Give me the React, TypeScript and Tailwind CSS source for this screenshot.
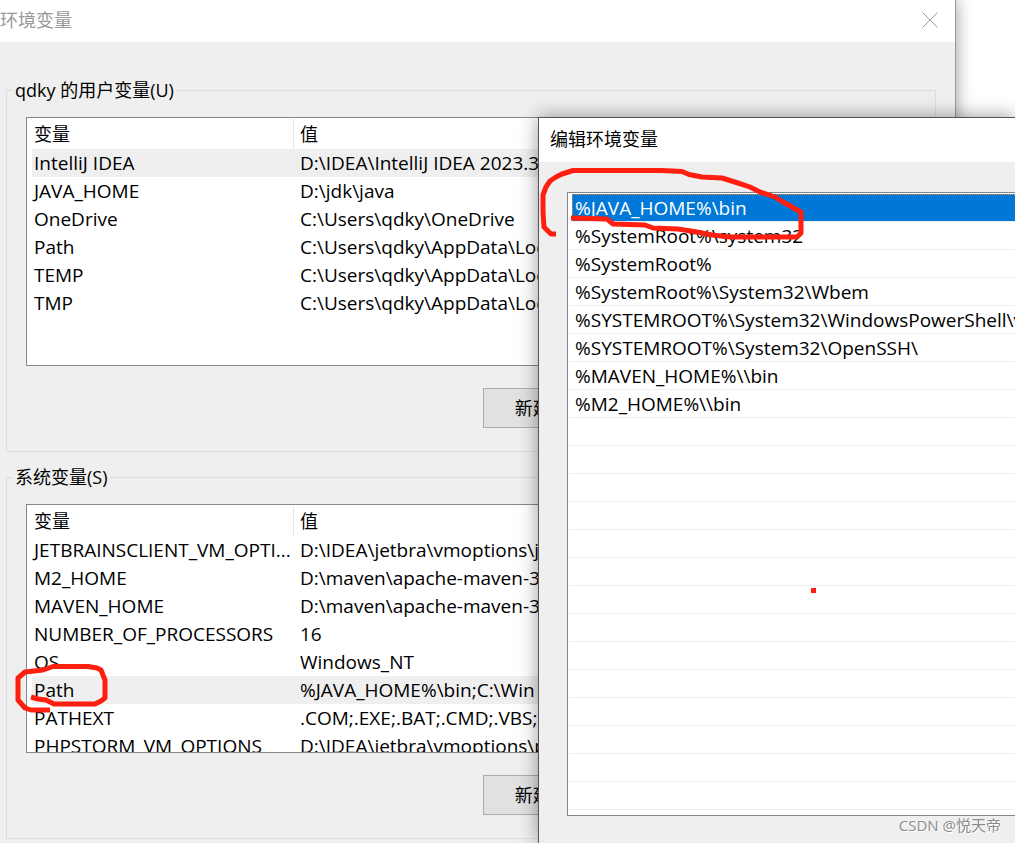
type Variable = { name: string; value: string };

const USER_VARIABLES: Variable[] = [
  { name: "IntelliJ IDEA", value: "D:\\IDEA\\IntelliJ IDEA 2023.3" },
  { name: "JAVA_HOME", value: "D:\\jdk\\java" },
  { name: "OneDrive", value: "C:\\Users\\qdky\\OneDrive" },
  { name: "Path", value: "C:\\Users\\qdky\\AppData\\Loc" },
  { name: "TEMP", value: "C:\\Users\\qdky\\AppData\\Loc" },
  { name: "TMP", value: "C:\\Users\\qdky\\AppData\\Loc" },
];

const SYSTEM_VARIABLES: Variable[] = [
  { name: "JETBRAINSCLIENT_VM_OPTI...", value: "D:\\IDEA\\jetbra\\vmoptions\\je" },
  { name: "M2_HOME", value: "D:\\maven\\apache-maven-3." },
  { name: "MAVEN_HOME", value: "D:\\maven\\apache-maven-3." },
  { name: "NUMBER_OF_PROCESSORS", value: "16" },
  { name: "OS", value: "Windows_NT" },
  { name: "Path", value: "%JAVA_HOME%\\bin;C:\\Win" },
  { name: "PATHEXT", value: ".COM;.EXE;.BAT;.CMD;.VBS;.V" },
  { name: "PHPSTORM_VM_OPTIONS", value: "D:\\IDEA\\jetbra\\vmoptions\\p" },
];

const PATH_ENTRIES = [
  "%JAVA_HOME%\\bin",
  "%SystemRoot%\\system32",
  "%SystemRoot%",
  "%SystemRoot%\\System32\\Wbem",
  "%SYSTEMROOT%\\System32\\WindowsPowerShell\\v",
  "%SYSTEMROOT%\\System32\\OpenSSH\\",
  "%MAVEN_HOME%\\\\bin",
  "%M2_HOME%\\\\bin",
];

const PATH_ROWS = 22;

function VariableGroup({
  title,
  variables,
  selected,
}: {
  title: string;
  variables: Variable[];
  selected: number;
}) {
  return (
    <fieldset className="h-[374px] min-w-0 border border-[#dcdcdc] pl-[6px]">
      <legend className="h-6 px-[2px] leading-6">{title}</legend>
      <div className="mt-[15px] mr-[17px] ml-[13px] h-[249px] overflow-hidden border border-[#828790] bg-white pl-[5px]">
        <table className="w-full table-fixed border-collapse text-left">
          <thead>
            <tr className="h-[31px]">
              <th scope="col" className="w-[262px] p-0 font-normal">
                <div className="h-[30px] border-r border-[#e5e5e5] pl-[2px] leading-[31px]">变量</div>
              </th>
              <th scope="col" className="p-0 pl-[6px] font-normal">
                值
              </th>
            </tr>
          </thead>
          <tbody className="text-[19px]">
            {variables.map((v, i) => (
              <tr key={v.name} className={i === selected ? "h-7 bg-[#efefef]" : "h-7"}>
                <td className="p-0 pl-[2px] leading-7 whitespace-nowrap">{v.name}</td>
                <td className="overflow-hidden p-0 pl-[6px] leading-7 whitespace-nowrap">{v.value}</td>
              </tr>
            ))}
          </tbody>
        </table>
      </div>
      <button
        type="button"
        className="mt-[22px] ml-[470px] h-10 w-[138px] border border-[#adadad] bg-[#e1e1e1]"
      >
        新建(N)...
      </button>
    </fieldset>
  );
}

function VariablesWindow() {
  return (
    <section className="mr-[59px] min-h-screen border-r border-[#999] bg-[#efefef] shadow-[0_0_16px_rgba(0,0,0,0.4)]">
      <header className="flex h-[42px] items-center justify-between bg-white pr-4 pb-[3px]">
        <h1 className="text-[#999]">环境变量</h1>
        <button type="button" aria-label="关闭" className="text-[#999]">
          <svg width="18" height="18" viewBox="0 0 18 18" fill="none" stroke="currentColor" aria-hidden="true">
            <path d="M1.5 1.5l15 15M16.5 1.5l-15 15" />
          </svg>
        </button>
      </header>
      <div className="flex flex-col gap-[13px] pt-9 pr-[19px] pl-[6px]">
        <VariableGroup title="qdky 的用户变量(U)" variables={USER_VARIABLES} selected={0} />
        <VariableGroup title="系统变量(S)" variables={SYSTEM_VARIABLES} selected={5} />
      </div>
    </section>
  );
}

function EditDialog() {
  return (
    <section className="absolute top-[117px] right-0 bottom-0 left-[538px] border-t border-l border-[#555] bg-[#efefef] shadow-[0_0_18px_rgba(0,0,0,0.4)]">
      <header className="flex h-11 items-center bg-white pb-[2px] pl-[11px]">
        <h2>编辑环境变量</h2>
      </header>
      <ul className="mt-[30px] ml-7 overflow-hidden border-y border-l border-[#828790] bg-white pt-px pb-[5px] pl-px text-[19px]">
        {Array.from({ length: PATH_ROWS }, (_, i) => (
          <li key={i} className="h-7 border-b border-[#efefef] pl-[3px]">
            <div
              className={
                i === 0
                  ? "h-[27px] border-t border-l border-dotted border-[#ff8728] bg-[#0078d7] pl-[2px] leading-[27px] whitespace-nowrap text-white"
                  : "h-[27px] pl-[3px] leading-7 whitespace-nowrap"
              }
            >
              {PATH_ENTRIES[i]}
            </div>
          </li>
        ))}
      </ul>
    </section>
  );
}

function PenMarks() {
  return (
    <svg
      className="pointer-events-none absolute inset-0 h-full w-full"
      fill="none"
      stroke="#ff1f10"
      strokeWidth="5"
      strokeLinejoin="round"
      aria-hidden="true"
    >
      <path d="M556 234H551L544 227L543 212V195L546 187L550 181L556 177L562 174L573 170.5H662L682 171.5L689 174.5L702 177L722 178L738 183L750 187L760 192L775 197L783 202L792 207L801 212V233L797 237H730L712 235L697 232L678 229L653 228L645 225L613 224L607 219L571 218" />
      <path d="M31 697L38 699L46 700L54 704H95L101 701L105 698V680L101 670L97 668L88 666.5H53L43 670L25 672L18 678V700L25 708L31 710H50" />
      <path d="M811 590.5h5" />
    </svg>
  );
}

export default function App() {
  return (
    <main className="relative min-h-screen overflow-hidden bg-white font-['Open_Sans','Noto_Sans_CJK_SC',sans-serif] text-[18px] leading-6 text-black">
      <VariablesWindow />
      <EditDialog />
      <PenMarks />
      <p className="absolute right-[14px] bottom-[6px] text-[15px] text-[#8c8c8c] [text-shadow:1px_1px_0_white]">
        CSDN @悦天帝
      </p>
    </main>
  );
}
